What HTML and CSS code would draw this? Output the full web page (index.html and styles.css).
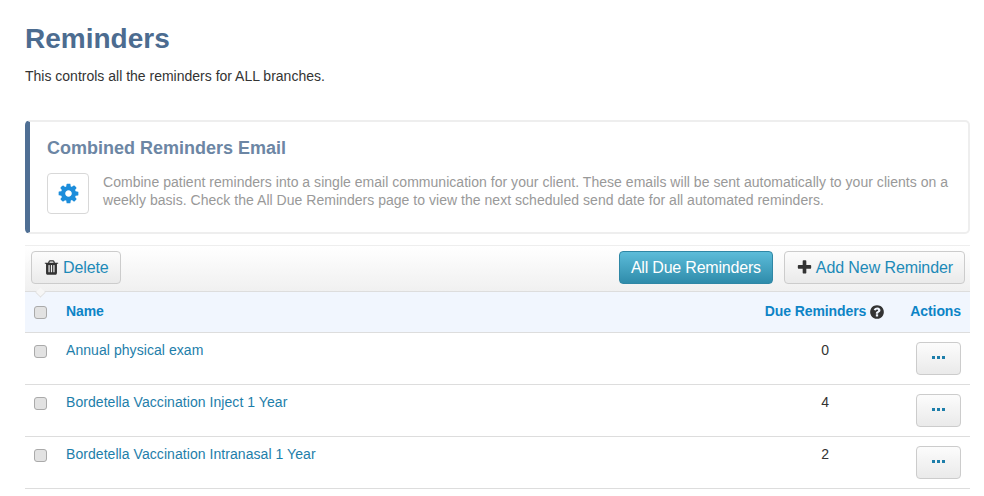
FILE: index.html
```html
<!DOCTYPE html>
<html lang="en">
<head>
    <meta charset="UTF-8">
    <meta name="viewport" content="width=device-width, initial-scale=1.0">
    <title>Reminders</title>
    <link rel="stylesheet" href="styles.css">
</head>
<body>
    <svg class="icon-defs" aria-hidden="true">
        <symbol id="icon-cog" viewBox="0 0 1792 1792"><path d="M1152 896q0-106-75-181t-181-75-181 75-75 181 75 181 181 75 181-75 75-181zm512-109v222q0 12-8 23t-20 13l-185 28q-19 54-39 91 35 50 107 138 10 12 10 25t-9 23q-27 37-99 108t-94 71q-12 0-26-9l-138-108q-44 23-91 38-16 136-29 186-7 28-36 28h-222q-14 0-24.500-8.500t-11.500-21.500l-28-184q-49-16-90-37l-141 107q-10 9-25 9-14 0-25-11-126-114-165-168-7-10-7-23 0-12 8-23 15-21 51-66.500t54-70.500q-27-50-41-99l-183-27q-13-2-21-12.500t-8-23.500v-222q0-12 8-23t19-13l186-28q14-46 39-92-40-57-107-138-10-12-10-24 0-10 9-23 26-36 98.500-107.500t94.500-71.500q13 0 26 10l138 107q44-23 91-38 16-136 29-186 7-28 36-28h222q14 0 24.500 8.500t11.500 21.500l28 184q49 16 90 37l142-107q9-9 24-9 13 0 25 10 129 119 165 170 7 8 7 22 0 12-8 23-15 21-51 66.500t-54 70.500q26 50 41 98l183 28q13 2 21 12.500t8 23.500z"/></symbol>
        <symbol id="icon-trash" viewBox="0 0 1792 1792"><path d="M704 1376v-704q0-14-9-23t-23-9h-64q-14 0-23 9t-9 23v704q0 14 9 23t23 9h64q14 0 23-9t9-23zm256 0v-704q0-14-9-23t-23-9h-64q-14 0-23 9t-9 23v704q0 14 9 23t23 9h64q14 0 23-9t9-23zm256 0v-704q0-14-9-23t-23-9h-64q-14 0-23 9t-9 23v704q0 14 9 23t23 9h64q14 0 23-9t9-23zm-544-992h448l-48-117q-7-9-17-11h-317q-10 2-17 11zm928 32v64q0 14-9 23t-23 9h-96v948q0 83-47 143.500t-113 60.500h-832q-66 0-113-58.500t-47-141.500v-952h-96q-14 0-23-9t-9-23v-64q0-14 9-23t23-9h309l70-167q15-37 54-63t79-26h320q40 0 79 26t54 63l70 167h309q14 0 23 9t9 23z"/></symbol>
        <symbol id="icon-plus" viewBox="0 0 1792 1792"><path d="M1600 736v192q0 40-28 68t-68 28h-416v416q0 40-28 68t-68 28h-192q-40 0-68-28t-28-68v-416h-416q-40 0-68-28t-28-68v-192q0-40 28-68t68-28h416v-416q0-40 28-68t68-28h192q40 0 68 28t28 68v416h416q40 0 68 28t28 68z"/></symbol>
        <symbol id="icon-question" viewBox="0 0 1792 1792"><path d="M1024 1376v-192q0-14-9-23t-23-9h-192q-14 0-23 9t-9 23v192q0 14 9 23t23 9h192q14 0 23-9t9-23zm256-672q0-88-55.500-163t-138.500-116-170-41q-243 0-371 213-15 24 8 42l132 100q7 6 19 6 16 0 25-12 53-68 86-92 34-24 86-24 48 0 85.500 26t37.500 59q0 38-20 61t-68 45q-63 28-115.500 86.500t-52.500 125.500v36q0 14 9 23t23 9h192q14 0 23-9t9-23q0-19 21.500-49.500t54.500-49.500q32-18 49-28.500t46-35 44.500-48 28-60.500 12.500-81zm384 192q0 209-103 385.500t-279.500 279.500-385.500 103-385.500-103-279.500-279.500-103-385.500 103-385.500 279.500-279.500 385.500-103 385.500 103 279.500 279.500 103 385.500z"/></symbol>
    </svg>

    <div class="container">
        <h1>Reminders</h1>
        <p class="intro">This controls all the reminders for ALL branches.</p>

        <div class="info-card">
            <h2>Combined Reminders Email</h2>
            <div class="info-body">
                <div class="info-icon"><svg class="icon-cog"><use href="#icon-cog"/></svg></div>
                <p>Combine patient reminders into a single email communication for your client. These emails will be sent automatically to your clients on a weekly basis. Check the All Due Reminders page to view the next scheduled send date for all automated reminders.</p>
            </div>
        </div>

        <div class="toolbar">
            <a href="#" class="btn"><svg class="icon"><use href="#icon-trash"/></svg>Delete</a>
            <div class="toolbar-right">
                <a href="#" class="btn btn-primary">All Due Reminders</a>
                <a href="#" class="btn"><svg class="icon"><use href="#icon-plus"/></svg>Add New Reminder</a>
            </div>
        </div>

        <table class="reminders">
            <thead>
                <tr>
                    <th class="col-check"><span class="check"></span></th>
                    <th class="col-name">Name</th>
                    <th class="col-due">Due Reminders <svg class="icon-help"><use href="#icon-question"/></svg></th>
                    <th class="col-actions">Actions</th>
                </tr>
            </thead>
            <tbody>
                <tr>
                    <td class="col-check"><span class="check"></span></td>
                    <td class="col-name"><a href="#">Annual physical exam</a></td>
                    <td class="col-count">0</td>
                    <td class="col-actions"><a href="#" class="btn-more"><i></i><i></i><i></i></a></td>
                </tr>
                <tr>
                    <td class="col-check"><span class="check"></span></td>
                    <td class="col-name"><a href="#">Bordetella Vaccination Inject 1 Year</a></td>
                    <td class="col-count">4</td>
                    <td class="col-actions"><a href="#" class="btn-more"><i></i><i></i><i></i></a></td>
                </tr>
                <tr>
                    <td class="col-check"><span class="check"></span></td>
                    <td class="col-name"><a href="#">Bordetella Vaccination Intranasal 1 Year</a></td>
                    <td class="col-count">2</td>
                    <td class="col-actions"><a href="#" class="btn-more"><i></i><i></i><i></i></a></td>
                </tr>
            </tbody>
        </table>
    </div>
</body>
</html>
```

FILE: styles.css
```css
body {
    font-family: "Liberation Sans", Arial, sans-serif;
    font-size: 14px;
    line-height: 18px;
    margin: 0;
    background-color: #fff;
    color: #333;
}
a {
    text-decoration: none;
}
.icon-defs {
    display: none;
}
.container {
    width: 945px;
    margin-left: 25px;
    padding-top: 22px;
}
h1 {
    font-size: 28px;
    line-height: 34px;
    margin: 0 0 10px;
    color: #4c6c90;
}
.intro {
    margin: 0 0 34px;
    line-height: 20px;
}
.info-card {
    box-sizing: border-box;
    height: 114px;
    padding: 15px 10px 0 17px;
    border: 2px solid #eee;
    border-left: 5px solid #4f6f94;
    border-radius: 5px;
    margin-bottom: 11px;
}
.info-card h2 {
    font-size: 18px;
    line-height: 22px;
    margin: 0 0 14px;
    color: #6c86a4;
}
.info-body {
    display: flex;
    gap: 14px;
}
.info-icon {
    box-sizing: border-box;
    flex: none;
    width: 42px;
    height: 41px;
    display: flex;
    align-items: center;
    justify-content: center;
    border: 1px solid #d8d8d8;
    border-radius: 4px;
}
.icon-cog {
    width: 23px;
    height: 23px;
    fill: #1c8ddb;
}
.info-body p {
    margin: 0;
    color: #999;
    letter-spacing: 0.03px;
}
.toolbar {
    box-sizing: border-box;
    height: 47px;
    padding: 5px 5px 0 6px;
    display: flex;
    justify-content: space-between;
    align-items: flex-start;
    border-top: 1px solid #eee;
    border-bottom: 1px solid #ddd;
    background: linear-gradient(#fff, #f0f0f0);
    position: relative;
}
.toolbar::after {
    content: "";
    position: absolute;
    left: 11px;
    bottom: -6px;
    width: 8px;
    height: 8px;
    background: #f6f6f6;
    border-right: 1px solid #ddd;
    border-bottom: 1px solid #ddd;
    transform: rotate(45deg) scale(0.8);
}
.toolbar-right {
    display: flex;
    gap: 11px;
}
.btn {
    box-sizing: border-box;
    height: 33px;
    padding: 0 11px;
    display: flex;
    align-items: center;
    font-size: 16px;
    letter-spacing: -0.1px;
    color: #1d8ab8;
    border: 1px solid #ccc;
    border-radius: 4px;
    background: linear-gradient(#fcfcfc, #eaeaea);
}
.btn-primary {
    color: #fff;
    letter-spacing: -0.2px;
    border-color: #2f87a5;
    background: linear-gradient(#5cbcd9, #2f8cab);
}
.icon {
    width: 17px;
    height: 17px;
    margin-right: 3px;
    fill: #333;
}
.reminders {
    width: 100%;
    border-collapse: collapse;
    table-layout: fixed;
}
.reminders th {
    height: 40px;
    padding: 0 0 2px;
    box-sizing: border-box;
    font-size: 14px;
    letter-spacing: -0.1px;
    color: #0d84c6;
    background: #f1f6fe;
    border-bottom: 1px solid #ddd;
}
.reminders tbody tr {
    height: 52px;
}
.reminders td {
    padding: 0;
    vertical-align: top;
    border-bottom: 1px solid #ddd;
}
.col-check {
    width: 41px;
}
.col-name {
    text-align: left;
}
.col-name a {
    color: #1d7eaa;
    letter-spacing: 0.06px;
}
.reminders td.col-name,
.reminders td.col-count {
    padding-top: 8px;
}
.col-due {
    width: 200px;
    text-align: right;
}
.reminders td.col-count {
    text-align: right;
    padding-right: 56px;
}
.col-actions {
    width: 85px;
    text-align: right;
}
.reminders .col-actions {
    padding-right: 9px;
}
.check {
    display: block;
    box-sizing: border-box;
    width: 13px;
    height: 13px;
    margin-left: 9px;
    background: #e2e2e2;
    border: 1px solid #aaa;
    border-radius: 3px;
}
th .check {
    margin-top: 4px;
}
td .check {
    margin-top: 12px;
}
.icon-help {
    width: 16px;
    height: 16px;
    margin-left: -1px;
    vertical-align: -4px;
    fill: #333;
}
.btn-more {
    box-sizing: border-box;
    width: 45px;
    height: 33px;
    margin: 9px 0 0 auto;
    display: flex;
    align-items: center;
    justify-content: center;
    gap: 2px;
    border: 1px solid #ccc;
    border-radius: 4px;
    background: linear-gradient(#fcfcfc, #eaeaea);
}
.btn-more i {
    width: 3px;
    height: 3px;
    margin-bottom: 2px;
    background: #1d7eaa;
}
```
